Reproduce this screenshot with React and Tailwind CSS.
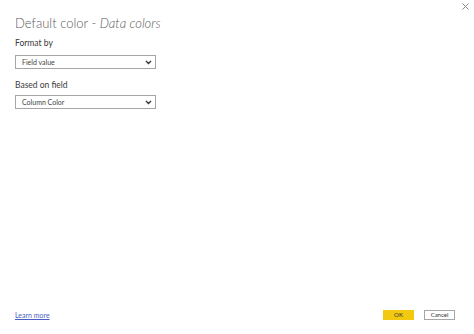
import React from "react";

function Chevron() {
  return (
    <svg width="7" height="5" viewBox="0 0 7 5" className="shrink-0">
      <path d="M1 1 L3.5 3.5 L6 1" stroke="#333" strokeWidth="1.4" fill="none" />
    </svg>
  );
}

function Select({ label }) {
  return (
    <div className="w-[141px] h-[14px] border border-[#a6a6a6] bg-white flex items-center justify-between pl-[6px] pr-[3px]">
      <span className="text-[7px] leading-none text-[#444]">{label}</span>
      <Chevron />
    </div>
  );
}

export default function App() {
  return (
    <div
      className="w-[474px] h-[334px] bg-white relative flex flex-col"
      style={{ fontFamily: 'Lato, "Open Sans", sans-serif' }}
    >
      <button className="absolute right-[2px] top-[1px] w-[14px] h-[10px] flex items-center justify-center">
        <svg width="7" height="7" viewBox="0 0 7 7">
          <path d="M0.5 0.5 L6.5 6.5 M6.5 0.5 L0.5 6.5" stroke="#8a8a8a" strokeWidth="1" />
        </svg>
      </button>
      <div className="pl-[15px] pt-[15px] flex flex-col">
        <div className="text-[13px] leading-[16px] font-light text-[#5a5a5a]">
          Default color - <span className="italic">Data colors</span>
        </div>
        <div className="mt-[6px] text-[8.5px] leading-[12px] text-[#3a3a3a]">Format by</div>
        <div className="mt-[6px]">
          <Select label="Field value" />
        </div>
        <div className="mt-[10px] text-[8.5px] leading-[12px] text-[#3a3a3a]">Based on field</div>
        <div className="mt-[4px]">
          <Select label="Column Color" />
        </div>
      </div>
      <div className="mt-auto flex items-center justify-between pl-[15px] pr-[19px] pb-[14px]">
        <a className="text-[7px] leading-none text-[#4a5fc1] underline">Learn more</a>
        <div className="flex gap-[10px]">
          <button className="w-[31px] h-[10px] bg-[#f2c811] text-[6px] leading-none text-[#333] flex items-center justify-center">
            OK
          </button>
          <button className="w-[31px] h-[10px] bg-white border border-[#a6a6a6] text-[6px] leading-none text-[#333] flex items-center justify-center">
            Cancel
          </button>
        </div>
      </div>
    </div>
  );
}
